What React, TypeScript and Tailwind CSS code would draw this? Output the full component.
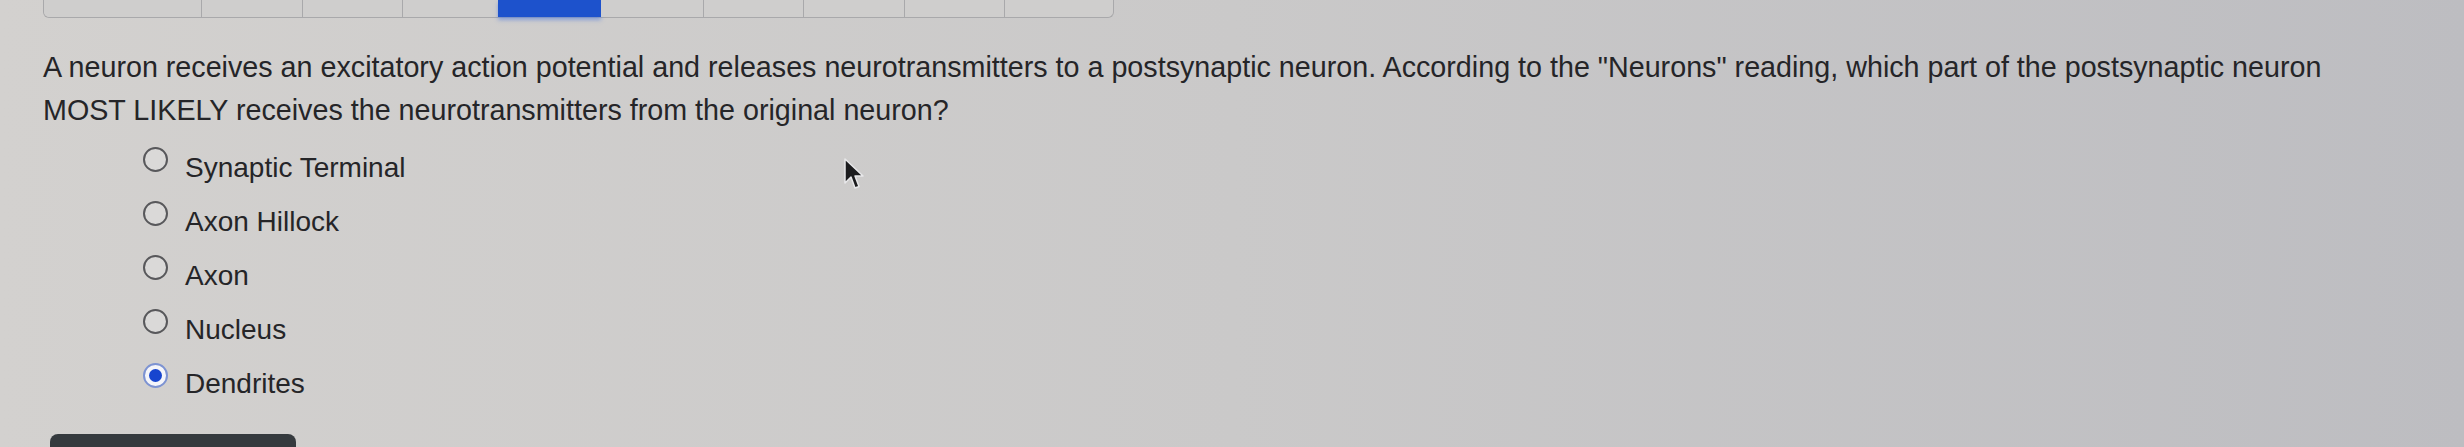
import React from "react";

const tabs = [157, 101, 100, 96, 103, 102, 100, 101, 100, 109];
const ACTIVE_TAB = 4;

const options = [
  { label: "Synaptic Terminal", checked: false },
  { label: "Axon Hillock", checked: false },
  { label: "Axon", checked: false },
  { label: "Nucleus", checked: false },
  { label: "Dendrites", checked: true },
];

function Radio({ checked }: { checked: boolean }) {
  if (checked) {
    return (
      <span className="mt-[7px] flex h-[25px] w-[25px] shrink-0 items-center justify-center rounded-full border-2 border-[#7d93d2] bg-[#f4f5fa]">
        <span className="h-[13px] w-[13px] rounded-full bg-[#1745cf]" />
      </span>
    );
  }
  return (
    <span className="mt-[7px] h-[25px] w-[25px] shrink-0 rounded-full border-2 border-[#58585b] bg-[#dad9d8]" />
  );
}

function Cursor() {
  return (
    <svg
      className="absolute left-[843px] top-[157px]"
      width="22"
      height="34"
      viewBox="0 0 22 34"
    >
      <path
        d="M2 2 L2 26 L8 20 L12 31 L16 29.5 L12 19 L20 19 Z"
        fill="#1c1c1e"
        stroke="#e8e8ea"
        strokeWidth="1.5"
        strokeLinejoin="round"
      />
    </svg>
  );
}

export default function App() {
  return (
    <div className="relative h-[447px] w-[2464px] overflow-hidden bg-gradient-to-r from-[#d3d1cf] via-[#cac9c9] to-[#bdbdc1] font-['Liberation_Sans',Arial,sans-serif] text-[#252528]">
      {/* question nav strip, mostly scrolled off the top */}
      <div className="ml-[43px] flex h-[18px] w-fit rounded-b-[6px] border-x border-b border-[#a9a9ab]">
        {tabs.map((w, i) =>
          i === ACTIVE_TAB ? (
            <div
              key={i}
              style={{ width: w }}
              className="h-[17px] bg-[#1d52cc] shadow-[0_3px_4px_rgba(90,130,220,0.6)]"
            />
          ) : (
            <div
              key={i}
              style={{ width: w }}
              className={`h-[17px] bg-[#cfcecd] ${i > 0 && i !== ACTIVE_TAB + 1 ? "border-l border-[#a9a9ab]" : ""} ${i === 0 ? "rounded-bl-[6px]" : ""} ${i === tabs.length - 1 ? "rounded-br-[6px]" : ""}`}
            />
          )
        )}
      </div>

      <div className="pl-[43px]">
        <p className="mt-[28px] w-[2330px] text-[28.7px] leading-[43px]">
          A neuron receives an excitatory action potential and releases neurotransmitters to a postsynaptic neuron. According to the "Neurons" reading, which part of the postsynaptic neuron MOST LIKELY receives the neurotransmitters from the original neuron?
        </p>

        <div className="mt-[8px] flex flex-col pl-[100px]">
          {options.map((o) => (
            <label key={o.label} className="flex h-[54px] items-start">
              <Radio checked={o.checked} />
              <span className="ml-[17px] text-[28px] leading-[55px]">{o.label}</span>
            </label>
          ))}
        </div>

        <button className="ml-[7px] mt-[24px] h-[44px] w-[246px] rounded-[8px] bg-[#353a3e]" />
      </div>

      <Cursor />
    </div>
  );
}
